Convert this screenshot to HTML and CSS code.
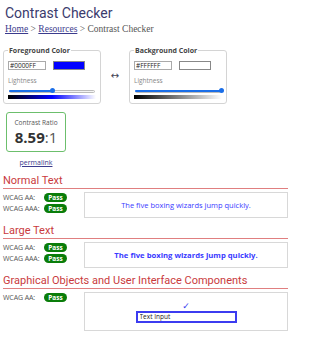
FILE: index.html
```html
<!DOCTYPE html>
<html>
  <head>
    <meta charset="utf-8" />
    <link rel="stylesheet" href="styles.css">
  </head>
  <body>
    <div class="page">
      <h1 class="title">Contrast Checker</h1>
      <p class="crumbs"><a href="#">Home</a> &gt; <a href="#">Resources</a> &gt; Contrast Checker</p>

      <div class="pickers">
        <fieldset class="picker">
          <legend>Foreground Color</legend>
          <div class="color-row">
            <input class="hex" type="text" value="#0000FF" />
            <span class="swatch" style="background:#0000ff"></span>
          </div>
          <div class="label">Lightness</div>
          <div class="slider">
            <span class="fill" style="width:50%"></span>
            <span class="thumb" style="left:50%"></span>
          </div>
          <div class="grad fg-grad"></div>
        </fieldset>

        <span class="swap">&#8596;</span>

        <fieldset class="picker">
          <legend>Background Color</legend>
          <div class="color-row">
            <input class="hex" type="text" value="#FFFFFF" />
            <span class="swatch" style="background:#ffffff"></span>
          </div>
          <div class="label">Lightness</div>
          <div class="slider">
            <span class="fill" style="width:100%"></span>
            <span class="thumb" style="left:100%"></span>
          </div>
          <div class="grad bg-grad"></div>
        </fieldset>
      </div>

      <div class="ratio-wrap">
        <div class="ratio">
          <div class="ratio-label">Contrast Ratio</div>
          <div class="ratio-value"><b>8.59</b>:1</div>
        </div>
        <a class="permalink" href="#">permalink</a>
      </div>

      <!-- normal text -->
      <h2 class="section">Normal Text</h2>
      <div class="result">
        <div class="levels">
          <div class="level"><span class="level-name">WCAG AA:</span><span class="pass">Pass</span></div>
          <div class="level"><span class="level-name">WCAG AAA:</span><span class="pass">Pass</span></div>
        </div>
        <div class="sample">The five boxing wizards jump quickly.</div>
      </div>

      <!-- large text -->
      <h2 class="section">Large Text</h2>
      <div class="result">
        <div class="levels">
          <div class="level"><span class="level-name">WCAG AA:</span><span class="pass">Pass</span></div>
          <div class="level"><span class="level-name">WCAG AAA:</span><span class="pass">Pass</span></div>
        </div>
        <div class="sample large">The five boxing wizards jump quickly.</div>
      </div>

      <!-- ui components -->
      <h2 class="section">Graphical Objects and User Interface Components</h2>
      <div class="result">
        <div class="levels">
          <div class="level"><span class="level-name">WCAG AA:</span><span class="pass">Pass</span></div>
        </div>
        <div class="sample ui">
          <span class="check">&#10003;</span>
          <input class="demo-input" type="text" value="Text Input" />
        </div>
      </div>
    </div>
  </body>
</html>
```

FILE: styles.css
```css
body {
  margin: 0;
  background: #ffffff;
  color: #444;
  font-family: "Open Sans", sans-serif;
}

.page {
  padding-left: 3px;
}

.title {
  margin: 3px 0 0 2px;
  font: 400 14px/20px Roboto, sans-serif;
  color: #3b3b6d;
}

.crumbs {
  margin: 1px 0 0 2px;
  font: 9.5px/10px "Liberation Serif", serif;
  color: #555;
}

.crumbs a {
  color: #3b3b8d;
}

/* colour pickers */
.pickers {
  display: flex;
  align-items: center;
  margin-top: 12px;
}

.picker {
  width: 98px;
  box-sizing: border-box;
  margin: 0;
  padding: 6px 4px 4px 4px;
  border: 1px solid #d4d4d4;
  border-radius: 3px;
}

.picker legend {
  padding: 0 1px;
  margin-left: 0;
  font: 700 7px/9px "Open Sans", sans-serif;
  color: #444;
}

.color-row {
  display: flex;
  align-items: center;
}

.hex {
  width: 38px;
  height: 9px;
  box-sizing: border-box;
  margin: 0 7px 0 0;
  padding: 0 1px;
  border: 1px solid #aaa;
  font: 6.5px "Open Sans", sans-serif;
  color: #222;
}

.swatch {
  width: 30px;
  height: 7px;
  border: 1px solid #888;
}

.label {
  margin-top: 6px;
  font-size: 6.5px;
  line-height: 9px;
  color: #888;
}

.slider {
  position: relative;
  height: 6px;
  margin: 3px 1px 0 1px;
}

.slider::before {
  content: "";
  position: absolute;
  left: 0;
  right: 0;
  top: 2px;
  height: 1px;
  border: 0.5px solid #bbb;
  border-radius: 2px;
  background: #f4f4f4;
}

.slider .fill {
  position: absolute;
  left: 0;
  top: 2px;
  height: 2px;
  border-radius: 1px;
  background: #1a6ee8;
}

.slider .thumb {
  position: absolute;
  top: 0;
  width: 5px;
  height: 5px;
  margin-left: -2.5px;
  border-radius: 50%;
  background: #1a6ee8;
}

.grad {
  height: 4px;
  margin-top: 1px;
}

.fg-grad {
  background: linear-gradient(to right, #000000, #0000ff 50%, #ffffff);
}

.bg-grad {
  background: linear-gradient(to right, #000000, #ffffff);
}

.swap {
  width: 28px;
  text-align: center;
  font: 10px "DejaVu Sans", sans-serif;
  color: #445;
}

/* ratio */
.ratio-wrap {
  width: 60px;
  margin: 8px 0 0 3px;
  text-align: center;
}

.ratio {
  box-sizing: border-box;
  height: 40px;
  padding-top: 5px;
  border: 1.5px solid #6cbf6c;
  border-radius: 3px;
}

.ratio-label {
  font-size: 6.5px;
  line-height: 9px;
  color: #555;
}

.ratio-value {
  font: 400 15px/20px "Open Sans", sans-serif;
  color: #555;
}

.ratio-value b {
  color: #333;
}

.permalink {
  display: block;
  margin-top: 6px;
  font: 7px/10px "Open Sans", sans-serif;
  color: #3b3b8d;
}

/* results */
.section {
  width: 285px;
  margin: 6px 0 0 0;
  padding-bottom: 1px;
  border-bottom: 1.5px solid #e07f80;
  font: 400 11px/13px Roboto, sans-serif;
  color: #c93a3d;
}

.result {
  display: flex;
  margin-top: 3px;
}

.levels {
  width: 81px;
}

.level {
  display: flex;
  align-items: center;
  height: 11px;
}

.level-name {
  width: 41px;
  font-size: 7px;
  letter-spacing: -0.1px;
  color: #555;
}

.pass {
  width: 23px;
  height: 9px;
  border-radius: 5px;
  background: #0a7d0a;
  color: #ffffff;
  font: 700 6.5px/9px "Open Sans", sans-serif;
  text-align: center;
}

.sample {
  display: flex;
  align-items: center;
  justify-content: center;
  box-sizing: border-box;
  width: 204px;
  height: 26px;
  border: 1px solid #d8d8d8;
  font-size: 7.5px;
  color: #3a3aff;
}

.sample.large {
  font-weight: 700;
  font-size: 7.7px;
}

.sample.ui {
  flex-direction: column;
  height: 39px;
}

.check {
  font: 9px/10px "DejaVu Sans", sans-serif;
  color: #3a3aef;
}

.demo-input {
  width: 101px;
  height: 12px;
  box-sizing: border-box;
  margin: 0;
  padding: 0 2px;
  border: 2px solid #3c3cf0;
  font: 6.5px "Open Sans", sans-serif;
  color: #222;
}
```
